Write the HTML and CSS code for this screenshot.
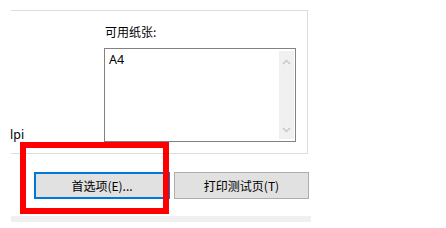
FILE: index.html
```html
<!doctype html>
<html lang="zh-CN">
<head>
  <meta charset="utf-8">
  <title>打印机属性</title>
  <link rel="stylesheet" href="styles.css">
</head>
<body>
  <div class="dlg">
    <div class="dlg-group">
      <div class="dlg-res">lpi</div>
      <div class="dlg-paper">
        <div class="dlg-label">可用纸张:</div>
        <div class="dlg-list">
          <div class="dlg-items">
            <div class="dlg-item">A4</div>
          </div>
          <div class="dlg-scroll">
            <svg width="9" height="6" viewBox="0 0 9 6"><path d="M1 5 L4.5 1.5 L8 5" fill="none" stroke="#c2c2c2" stroke-width="1.2"/></svg>
            <svg width="9" height="6" viewBox="0 0 9 6"><path d="M1 1 L4.5 4.5 L8 1" fill="none" stroke="#c2c2c2" stroke-width="1.2"/></svg>
          </div>
        </div>
      </div>
    </div>

    <div class="dlg-buttons">
      <button class="dlg-btn dlg-btn-default">首选项(E)...</button>
      <button class="dlg-btn">打印测试页(T)</button>
    </div>

    <div class="dlg-strip"></div>

    <div class="dlg-mark"></div>
  </div>
</body>
</html>
```

FILE: styles.css
```css
:root {
  --line: #dcdcdc;
  --listBorder: #828282;
  --btnFace: #e1e1e1;
  --btnBorder: #adadad;
  --focus: #0078d7;
  --strip: #f0f0f0;
  --mark: #ff0000;
}

html body {
  margin: 0;
  padding: 0;
}

body {
  background: #fff;
  font-family: "Noto Sans CJK SC", "Noto Sans", sans-serif;
  font-size: 12px;
  line-height: 16px;
  color: #000;
}

.dlg {
  position: relative;
  width: 446px;
  height: 228px;
  padding-top: 10px;
  box-sizing: border-box;
}

.dlg-group {
  display: flex;
  margin-left: 11px;
  width: 297px;
  height: 144px;
  box-sizing: border-box;
  border-top: 1px solid var(--line);
  border-right: 1px solid var(--line);
  border-bottom: 1px solid var(--line);
}

.dlg-res {
  width: 94px;
  margin-left: -1px;
  align-self: flex-end;
  padding-bottom: 10px;
  font-family: "Noto Sans", sans-serif;
  font-size: 12.5px;
}

.dlg-paper {
  display: flex;
  flex-direction: column;
  padding-top: 13px;
}

.dlg-label {
  height: 16px;
  padding-left: 1px;
}

.dlg-list {
  display: flex;
  margin-top: 8px;
  width: 192px;
  height: 94px;
  box-sizing: border-box;
  border: 1px solid var(--listBorder);
}

.dlg-items {
  flex: 1;
  padding: 3px 0 0 4px;
}

.dlg-item {
  font-family: "Noto Sans", sans-serif;
  font-size: 12.5px;
}

.dlg-scroll {
  width: 15px;
  margin: 2px 1px 2px 0;
  background: var(--strip);
  display: flex;
  flex-direction: column;
  justify-content: space-between;
  align-items: center;
  padding: 8px 0 6px;
}

.dlg-buttons {
  display: flex;
  gap: 4px;
  margin: 18px 0 0 34px;
}

.dlg-btn {
  height: 27px;
  box-sizing: border-box;
  border: 1px solid var(--btnBorder);
  background: var(--btnFace);
  font-family: "Noto Sans CJK SC", sans-serif;
  font-size: 12px;
  color: #000;
  padding: 0;
  width: 135px;
}

.dlg-btn-default {
  width: 136px;
  border: 2px solid var(--focus);
}

.dlg-strip {
  margin: 17px 0 0 11px;
  width: 300px;
  height: 6px;
  background: var(--strip);
}

/* red annotation frame drawn over the dialog */
.dlg-mark {
  position: absolute;
  left: 20px;
  top: 142px;
  width: 149px;
  height: 72px;
  box-sizing: border-box;
  border: 6px solid var(--mark);
}
```
